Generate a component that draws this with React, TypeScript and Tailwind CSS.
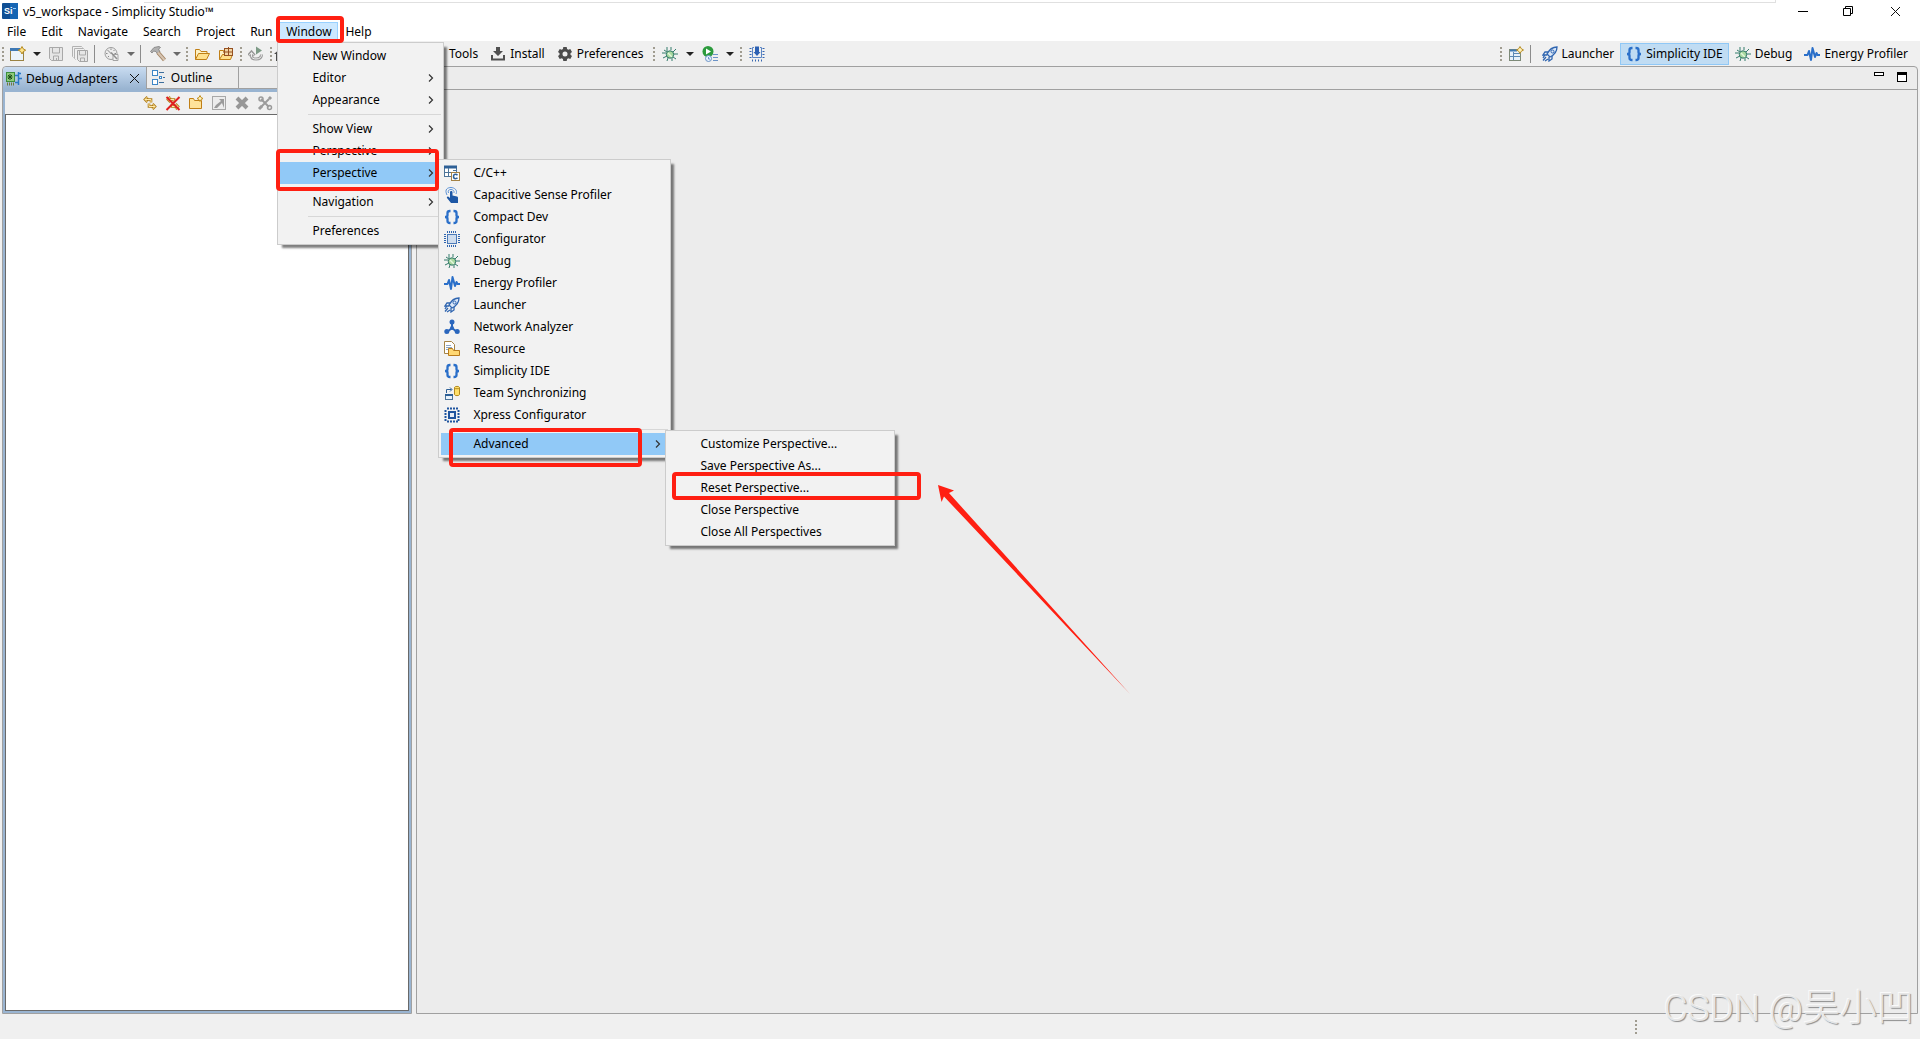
import type { ReactNode } from 'react';

interface MenuEntry {
  label: string;
  icon?: ReactNode;
  arrow?: boolean;
  active?: boolean;
  sub?: ReactNode;
}

type Entry = MenuEntry | 'sep';

function Svg({ children, size = 16 }: { children: ReactNode; size?: number }) {
  return (
    <svg width={size} height={size} viewBox="0 0 16 16" fill="none" className="shrink-0" aria-hidden="true">
      {children}
    </svg>
  );
}

const StudioIcon = () => (
  <svg width="16" height="16" viewBox="0 0 16 16" className="shrink-0" aria-hidden="true">
    <rect width="16" height="16" rx="1" fill="#0f4f94" />
    <rect x="8" width="8" height="16" fill="#1766b4" />
    <text x="2" y="11" fontSize="9" fontWeight="700" fontFamily="Liberation Sans, sans-serif" fill="#fff">
      Si
    </text>
    <rect x="11" y="5" width="3" height="1" fill="#8fd0ff" />
  </svg>
);

const NewIcon = () => (
  <Svg>
    <rect x="0.5" y="3.5" width="13" height="11" fill="#eaf3fb" stroke="#9b8343" />
    <rect x="0" y="2" width="10" height="3" fill="#3f79b5" />
    <path d="M12 0.5l1.3 2.4 2.4 1.3-2.4 1.3L12 8l-1.3-2.5-2.4-1.3 2.4-1.3z" fill="#ffe48a" stroke="#b58a22" />
  </Svg>
);

const SaveIcon = () => (
  <Svg>
    <path d="M1.5 1.5h13v13h-11l-2-2z" stroke="#a9a9a9" fill="#e6e6e6" />
    <path d="M4.5 2v5h7V2M5.5 14v-4h5v4M8.5 12v2" stroke="#a9a9a9" />
  </Svg>
);

const SaveAllIcon = () => (
  <Svg>
    <path d="M1.5 11.5l-1-1v-10h9l1 1M3.5 13.5l-1-1v-10h9l1 1" stroke="#b2b2b2" />
    <path d="M5.5 4.5h10v11h-8l-2-2z" stroke="#a5a5a5" fill="#e6e6e6" />
    <path d="M7.5 5v4h6V5M8.5 15v-3h4v3" stroke="#a9a9a9" />
  </Svg>
);

const GaugeIcon = () => (
  <Svg>
    <circle cx="7" cy="7.5" r="6" stroke="#9c9c9c" fill="#ececec" />
    <path d="M3.5 4l4 4M7 2.5V4M2 7.500h1.500M10.500 7.500H12M4 11l1-1M10.500 4l-1 1" stroke="#8a8a8a" />
    <path d="M9 8.500h5v6H9z" fill="#f1f1f1" stroke="#a3a3a3" />
    <path d="M7 6.500l6 6.500" stroke="#8f8f8f" strokeWidth="1.5" />
  </Svg>
);

const HammerIcon = () => (
  <Svg>
    <path d="M0.5 5.500L4 1.500l5-1 1.500 1L8.500 3l1.500 3-2.500 2-1.500-2.500L3.500 5l-1.500 2z" fill="#b1b1b1" stroke="#8d8d8d" />
    <path d="M8 6.500l6.500 7.500" stroke="#a58767" strokeWidth="4" />
    <path d="M8 6.500l6.500 7.500" stroke="#d6c4b2" strokeWidth="2" />
  </Svg>
);

const FolderIcon = () => (
  <Svg>
    <path d="M1.5 13.500v-10h4l1.500 2h6v2" fill="#fdf1c4" stroke="#c07f16" />
    <path d="M1.5 13.500l3-6h11l-3 6z" fill="#ffe08c" stroke="#c07f16" />
  </Svg>
);

const PackageFolderIcon = () => (
  <Svg>
    <path d="M1.5 13.500v-9h4l1 2h6v2" fill="#fdf1c4" stroke="#c07f16" />
    <path d="M1.5 13.500l3-5h10l-2 5z" fill="#ffe08c" stroke="#c07f16" />
    <rect x="6.5" y="2.5" width="8" height="7" fill="#f3d6a4" stroke="#955021" />
    <path d="M10.5 1v9M5 6h10" stroke="#955021" />
  </Svg>
);

const RunExternalIcon = () => (
  <Svg>
    <path d="M8 0.5l6 4-6 4z" fill="#7d9a86" />
    <path
      d="M3.5 6.500v3.500c0 2 2 3 4.500 3 3.500 0 5.500-1.500 5.500-4.500M0.5 9.500l3-3.500 3 3.500"
      stroke="#9a9a9a"
      strokeWidth="3"
    />
    <path d="M3.5 7v3c0 2 2 3 4.500 3 3.500 0 5.500-1.500 5.500-4.500M1 9.500l2.500-3L6 9.500" stroke="#efefef" />
  </Svg>
);

const HomeIcon = () => (
  <Svg>
    <path d="M0 8l8-7 8 7h-2v7h-4v-5H6v5H2V8z" fill="#4b4b4b" />
  </Svg>
);

const InstallIcon = () => (
  <Svg>
    <path d="M6 1h4v4h3l-5 5-5-5h3z" fill="#505050" />
    <path d="M2 9v4.500h12V9" stroke="#505050" strokeWidth="2" />
  </Svg>
);

const GearIcon = () => (
  <Svg>
    <path
      fillRule="evenodd"
      fill="#4d4d4d"
      d="M6.300 1h3.400l.4 2 1.200.7 2-.8 1.700 3-1.500 1.400v1.400l1.500 1.400-1.700 3-2-.8-1.200.7-.4 2H6.300l-.4-2-1.200-.7-2 .8-1.700-3 1.500-1.400V7.300L1 5.900l1.700-3 2 .8L5.900 3zM8 5.500a2.500 2.500 0 100 5 2.500 2.500 0 000-5z"
    />
  </Svg>
);

const BugIcon = () => (
  <Svg>
    <path
      d="M5 1v4M9 1v3M2 4l3 2M14 3l-3 3M0 7h4M11 8h5M1 12l4-2M14 13l-3-2M6 12l-1 3M10 12v3"
      stroke="#347c6c"
    />
    <circle cx="8" cy="8.5" r="3.7" fill="#a9d9a0" stroke="#2c7466" />
    <path d="M6 7l4 4" stroke="#e4f7dc" strokeWidth="1.5" />
  </Svg>
);

const RunIcon = () => (
  <Svg>
    <circle cx="6" cy="5.5" r="5.5" fill="#2c9b3d" />
    <path d="M4 2.500l5 3-5 3z" fill="#fff" />
    <circle cx="6.5" cy="12.5" r="3" fill="#e8f2fd" stroke="#6b93c7" />
    <path d="M6.5 11v2H8M11 8.500h5M11 11.500h5M11 14.500h5" stroke="#6b93c7" />
  </Svg>
);

const FlashIcon = () => (
  <Svg>
    <path
      d="M0.5 2.500h2M0.5 5.500h2M0.5 8.500h2M0.5 11.500h2M13.500 2.500h2M13.500 5.500h2M13.500 8.500h2M13.500 11.500h2"
      stroke="#3767b0"
    />
    <path d="M3.500 13.500v2M6.500 13.500v2M9.500 13.500v2M12.500 13.500v2" stroke="#3767b0" />
    <path d="M5 1.500H3.500v10h9v-10H11" stroke="#5a85c4" />
    <path d="M6 0.500h4V6h1.500L8 10 4.500 6H6z" fill="#2d61b3" />
  </Svg>
);

const OpenPerspectiveIcon = () => (
  <Svg>
    <rect x="1.5" y="3.5" width="11" height="11" fill="#e7f1fb" stroke="#7d8a78" />
    <path d="M2 4.500h7" stroke="#3f79b5" strokeWidth="2" />
    <path d="M5.5 6v8M2 10.500h10M5.500 7.500h7" stroke="#5b88b5" />
    <path d="M12 0.5l1.300 2.200 2.200 1.300-2.200 1.300L12 7.500l-1.300-2.200L8.500 4l2.200-1.300z" fill="#fff0b8" stroke="#b58a22" />
  </Svg>
);

const RocketIcon = () => (
  <Svg>
    <path d="M15 1C10 1 7 4 5 8l3 3c4-2 7-5 7-10z" fill="#dce8f8" stroke="#2f65b0" strokeWidth="1.3" />
    <circle cx="10.5" cy="5.5" r="1.5" stroke="#2f65b0" />
    <path d="M6 6H3L1 9h4M10 10v3l-3 2v-4M4 11l-3 3.500M6 13l-3 2M2.500 9.500L1 12" stroke="#2f65b0" strokeWidth="1.3" />
  </Svg>
);

const BracesIcon = () => (
  <Svg>
    <path
      d="M6.500 2H6C4.300 2 3.500 2.600 3.500 4v2.300C3.500 7.500 2.700 8 1 8c1.700 0 2.500.5 2.500 1.700V12c0 1.400.8 2 2.500 2h.5M9.500 2h.5c1.700 0 2.500.6 2.500 2v2.300c0 1.200.8 1.700 2.500 1.700-1.700 0-2.500.5-2.500 1.700V12c0 1.400-.8 2-2.500 2h-.5"
      stroke="#2a6fc9"
      strokeWidth="2.3"
    />
  </Svg>
);

const PulseIcon = () => (
  <Svg>
    <path d="M0 9h3.500L5 5l2 9L8.500 2l2.500 9 1.500-4 1 2H16" stroke="#2a6fc9" strokeWidth="2" strokeLinejoin="round" />
  </Svg>
);

const CppIcon = () => (
  <Svg>
    <rect x="0.5" y="1.5" width="12" height="10" fill="#fff" stroke="#4d7499" />
    <path d="M0 2h13" stroke="#2e6096" strokeWidth="3" />
    <path d="M4.500 3v9M1 7.500h8M9 5.500h3" stroke="#4d7499" />
    <rect x="7.5" y="7.5" width="8" height="8" fill="#fff" stroke="#a58345" />
    <path d="M13.500 10.200c-.6-.7-1.200-.9-2-.9-1.300 0-2 .9-2 2.200s.7 2.200 2 2.200c.8 0 1.400-.2 2-.9" stroke="#2e6096" strokeWidth="1.5" />
  </Svg>
);

const TouchIcon = () => (
  <Svg>
    <path d="M3 8C0 2 4 0.500 7 0.500S14 3 12 7M4.500 6C3.500 3.500 5 2.500 7 2.500s3.500 1.500 3 3.500" stroke="#5d93d6" />
    <path d="M6 5c0-1.500 2.500-1.500 2.500 0v3.500L13 9.500c1 .3 1 1 1 2V16H7l-4-5c-.5-1 .5-2 1.500-1.200L6 11z" fill="#1d57a5" />
  </Svg>
);

const ConfiguratorIcon = () => (
  <Svg>
    <path
      d="M3.500 0v2M5.500 0v2M7.500 0v2M9.500 0v2M11.500 0v2M3.500 14v2M5.500 14v2M7.500 14v2M9.500 14v2M11.500 14v2M0 3.500h2M0 5.500h2M0 7.500h2M0 9.500h2M0 11.500h2M14 3.500h2M14 5.500h2M14 7.500h2M14 9.500h2M14 11.500h2"
      stroke="#2f65b0"
    />
    <rect x="3.5" y="3.5" width="9" height="9" fill="#cfddee" stroke="#4a79b8" />
  </Svg>
);

const NetworkIcon = () => (
  <Svg>
    <path d="M8 3v6M8 9l-5 4M8 9l5 4" stroke="#2a66bd" strokeWidth="2" />
    <circle cx="8" cy="3" r="2.5" fill="#2a66bd" />
    <circle cx="2.8" cy="12.5" r="2.5" fill="#2a66bd" />
    <circle cx="13.2" cy="12.5" r="2.5" fill="#2a66bd" />
    <circle cx="8" cy="9" r="2" fill="#2a66bd" />
  </Svg>
);

const ResourceIcon = () => (
  <Svg>
    <path d="M0.5 0.500h7l3 3v9h-10z" fill="#fff" stroke="#a58345" />
    <path d="M2 4.500h5M2 6.500h6M2 8.500h3" stroke="#8ca5c4" />
    <path d="M4.500 14.500v-7h4l1 2h6v5z" fill="#ffd873" stroke="#b97b1b" />
  </Svg>
);

const TeamIcon = () => (
  <Svg>
    <rect x="1.5" y="9.5" width="7" height="5" fill="#eaf3fb" stroke="#4d7499" />
    <path d="M1 10h8" stroke="#2e6096" strokeWidth="2" />
    <path d="M2.500 8V4.500h5M6 2.500l2 2-2 2" stroke="#2e6096" />
    <path d="M10.500 2.500v7c0 1.500 5 1.500 5 0v-7c0-1.500-5-1.500-5 0z" fill="#ffe06a" stroke="#b38a1f" />
    <path d="M10.500 3c0 1 5 1 5 0" stroke="#b38a1f" />
  </Svg>
);

const XpressIcon = () => (
  <Svg>
    <path d="M3 1.500h11M3 14.500h11M1.500 3v11M14.500 3v11" stroke="#1f549f" strokeWidth="2" strokeDasharray="2 1" />
    <rect x="5" y="5" width="6" height="6" fill="#e7eef8" stroke="#1f549f" strokeWidth="2" />
  </Svg>
);

const AdapterIcon = () => (
  <Svg>
    <rect x="0.5" y="1.5" width="8" height="9" fill="#8fca7c" stroke="#3c8f3c" />
    <path d="M2 4l4 4M6 4L2 8M4 3v6M1.500 6h5" stroke="#184c18" />
    <path d="M1 13h8" stroke="#6f7a3a" strokeWidth="3" strokeDasharray="1 1" />
    <path d="M12.500 1v13M9 4.500h3M13 7.500h3M9 11.500h3M13 2.500h2" stroke="#2878c8" strokeWidth="1.5" />
  </Svg>
);

const OutlineIcon = () => (
  <Svg>
    <rect x="1.5" y="0.5" width="5" height="5" fill="#fff" stroke="#3d86c6" />
    <rect x="1.5" y="9.5" width="5" height="5" fill="#fff" stroke="#3d86c6" />
    <rect x="8.5" y="6.5" width="2" height="2" fill="#fff" stroke="#3d86c6" />
    <path d="M8 2.500h5M12 7.500h2M8 12.500h5" stroke="#3d6e9c" />
  </Svg>
);

const linkPath = 'M9 7.500V4.500H3M5.500 2L3 4.500 5.500 7M7 8.500v3h6M10.500 9l2.500 2.500-2.500 2.500';

const LinkIcon = ({ broken = false }: { broken?: boolean }) => (
  <Svg>
    <path d={linkPath} stroke="#b07d18" strokeWidth="2.6" />
    <path d={linkPath} stroke="#ffe9a8" />
    {broken && <path d="M1.500 2l13 13M14.500 2l-13 13" stroke="#e02020" strokeWidth="2" />}
  </Svg>
);

const NewFolderIcon = () => (
  <Svg>
    <path d="M1.500 13.500v-10h4l1 2h7v8z" fill="#ffe39a" stroke="#c07f16" />
    <path d="M12 0.500l1 2 2 1-2 1-1 2-1-2-2-1 2-1z" fill="#fff4c4" stroke="#c2901f" />
  </Svg>
);

const EditIcon = () => (
  <Svg>
    <rect x="1.5" y="1.5" width="13" height="13" fill="#ececec" stroke="#a8a8a8" />
    <path d="M8 4h5v9l-2-5-5 5H3l2-3 5-4z" fill="#9a9a9a" />
  </Svg>
);

const DeleteIcon = () => (
  <Svg>
    <path d="M3 3l10 10M13 3L3 13" stroke="#979797" strokeWidth="4" />
  </Svg>
);

const ToolsIcon = () => (
  <Svg>
    <path d="M4 4l8 8M12 4l-8 8" stroke="#9b9b9b" strokeWidth="2" />
    <circle cx="4" cy="4" r="2" stroke="#9b9b9b" strokeWidth="1.5" />
    <circle cx="12.5" cy="12.5" r="2" stroke="#9b9b9b" strokeWidth="1.5" />
    <path d="M12 4l2-2M2 14l3-3" stroke="#9b9b9b" strokeWidth="3" />
  </Svg>
);

const CloseIcon = () => (
  <svg width="11" height="11" viewBox="0 0 11 11" fill="none" aria-hidden="true">
    <path d="M1 1l9 9M10 1l-9 9" stroke="#111" />
  </svg>
);

const Grip = () => (
  <span className="flex h-4 w-[6px] shrink-0 flex-col items-center justify-between py-px">
    {[0, 1, 2, 3].map((n) => (
      <span key={n} className="size-[2px] bg-[#a09c90]" />
    ))}
  </span>
);

const Divider = () => <span className="mr-[5px] ml-[2px] h-[18px] w-px shrink-0 bg-[#8c8c8c]" />;

function IconButton({ label, children }: { label: string; children: ReactNode }) {
  return (
    <button type="button" aria-label={label} className="flex h-6 shrink-0 items-center px-1">
      {children}
    </button>
  );
}

function Caret({ label, dim = false }: { label: string; dim?: boolean }) {
  return (
    <button type="button" aria-label={label} className="flex h-6 w-[14px] shrink-0 items-center justify-center">
      <svg width="8" height="4" viewBox="0 0 8 4" aria-hidden="true">
        <path d="M0 0h8L4 4z" fill={dim ? '#6a6a6a' : '#222'} />
      </svg>
    </button>
  );
}

function TextButton({ icon, label, active = false }: { icon?: ReactNode; label: string; active?: boolean }) {
  return (
    <button
      type="button"
      className={`flex h-[22px] shrink-0 items-center gap-1 border px-[5px] whitespace-nowrap ${
        active ? 'border-[#90c8f6] bg-[#c0dcf3]' : 'border-transparent'
      }`}
    >
      {icon}
      {label}
    </button>
  );
}

function Menu({ items, className }: { items: Entry[]; className: string }) {
  return (
    <div
      role="menu"
      className={`absolute border border-[#cccccc] bg-[#f2f2f2] p-[2px] shadow-[4px_4px_2px_-1px_rgba(0,0,0,0.5)] ${className}`}
    >
      {items.map((item, index) =>
        item === 'sep' ? (
          <div key={index} className="ml-7 flex h-[7px] items-center">
            <div className="h-px w-full bg-[#d7d7d7]" />
          </div>
        ) : (
          <div key={index} className="relative">
            <button
              type="button"
              role="menuitem"
              className={`flex h-[22px] w-full items-center text-left whitespace-nowrap ${
                item.active ? 'bg-[#91c9f7]' : ''
              }`}
            >
              <span className="flex w-8 shrink-0 pl-[3px]">{item.icon}</span>
              <span className="flex-1">{item.label}</span>
              {item.arrow && (
                <svg width="6" height="8" viewBox="0 0 6 8" fill="none" className="mr-[7px]" aria-hidden="true">
                  <path d="M1 0.5L4.500 4 1 7.500" stroke="#333" strokeWidth="1.2" />
                </svg>
              )}
            </button>
            {item.sub}
          </div>
        ),
      )}
    </div>
  );
}

const advancedItems: Entry[] = [
  { label: 'Customize Perspective...' },
  { label: 'Save Perspective As...' },
  { label: 'Reset Perspective...' },
  { label: 'Close Perspective' },
  { label: 'Close All Perspectives' },
];

const perspectiveItems: Entry[] = [
  { label: 'C/C++', icon: <CppIcon /> },
  { label: 'Capacitive Sense Profiler', icon: <TouchIcon /> },
  { label: 'Compact Dev', icon: <BracesIcon /> },
  { label: 'Configurator', icon: <ConfiguratorIcon /> },
  { label: 'Debug', icon: <BugIcon /> },
  { label: 'Energy Profiler', icon: <PulseIcon /> },
  { label: 'Launcher', icon: <RocketIcon /> },
  { label: 'Network Analyzer', icon: <NetworkIcon /> },
  { label: 'Resource', icon: <ResourceIcon /> },
  { label: 'Simplicity IDE', icon: <BracesIcon /> },
  { label: 'Team Synchronizing', icon: <TeamIcon /> },
  { label: 'Xpress Configurator', icon: <XpressIcon /> },
  'sep',
  {
    label: 'Advanced',
    arrow: true,
    active: true,
    sub: <Menu items={advancedItems} className="-top-[3px] left-[224px] w-[230px]" />,
  },
];

const windowItems: Entry[] = [
  { label: 'New Window' },
  { label: 'Editor', arrow: true },
  { label: 'Appearance', arrow: true },
  'sep',
  { label: 'Show View', arrow: true },
  { label: 'Perspective', arrow: true },
  {
    label: 'Perspective',
    arrow: true,
    active: true,
    sub: <Menu items={perspectiveItems} className="-top-[3px] left-[158px] w-[233px]" />,
  },
  'sep',
  { label: 'Navigation', arrow: true },
  'sep',
  { label: 'Preferences' },
];

function TitleBar() {
  return (
    <header className="relative flex h-[22px] items-center bg-white pl-[2px]">
      <div className="absolute top-0 right-[144px] left-[144px] h-[3px] border-r border-b border-[#e0e0e0]" />
      <StudioIcon />
      <h1 className="ml-[5px] flex-1 pt-px">v5_workspace - Simplicity Studio™</h1>
      <div className="flex h-full items-center">
        <button type="button" aria-label="Minimize" className="flex h-full w-[45px] items-center justify-center">
          <span className="h-px w-[10px] bg-black" />
        </button>
        <button type="button" aria-label="Restore" className="flex h-full w-[45px] items-center justify-center">
          <svg width="10" height="10" viewBox="0 0 10 10" fill="none" stroke="#000" aria-hidden="true">
            <path d="M0.5 2.500h7v7h-7zM2.500 2V0.500h7v7H8" />
          </svg>
        </button>
        <button type="button" aria-label="Close" className="flex h-full w-[50px] items-center justify-center">
          <CloseIcon />
        </button>
      </div>
    </header>
  );
}

function MenuBar() {
  return (
    <nav className="flex h-[19px] bg-white">
      <div className="flex gap-px">
        {['File', 'Edit', 'Navigate', 'Search', 'Project', 'Run'].map((name) => (
          <button key={name} type="button" className="px-[7px] pt-px">
            {name}
          </button>
        ))}
      </div>
      <div className="relative z-10 flex">
        <button type="button" className="w-[59px] border border-[#99d1ff] bg-[#cce8ff]">
          Window
        </button>
        <Menu items={windowItems} className="top-5 -left-[2px] w-[167px]" />
      </div>
      <button type="button" className="px-[7px] pt-px">
        Help
      </button>
    </nav>
  );
}

function ToolBar() {
  return (
    <div className="flex h-[25px] items-center bg-[#f0f0f0] pt-px">
      <Grip />
      <IconButton label="New"><NewIcon /></IconButton>
      <Caret label="New options" />
      <IconButton label="Save"><SaveIcon /></IconButton>
      <IconButton label="Save all"><SaveAllIcon /></IconButton>
      <Divider />
      <IconButton label="Profile"><GaugeIcon /></IconButton>
      <Caret label="Profile options" dim />
      <Divider />
      <IconButton label="Build"><HammerIcon /></IconButton>
      <Caret label="Build options" dim />
      <Grip />
      <IconButton label="Open"><FolderIcon /></IconButton>
      <IconButton label="Open package"><PackageFolderIcon /></IconButton>
      <Grip />
      <IconButton label="Run last"><RunExternalIcon /></IconButton>
      <Grip />
      <button type="button" aria-label="Home" className="w-[169px] shrink-0">
        <HomeIcon />
      </button>
      <TextButton label="Tools" />
      <TextButton icon={<InstallIcon />} label="Install" />
      <TextButton icon={<GearIcon />} label="Preferences" />
      <div className="ml-px flex items-center gap-px">
        <Grip />
        <IconButton label="Debug"><BugIcon /></IconButton>
        <Caret label="Debug options" />
        <IconButton label="Run"><RunIcon /></IconButton>
        <Caret label="Run options" />
        <Grip />
        <IconButton label="Flash"><FlashIcon /></IconButton>
      </div>
      <div className="ml-auto flex items-center pr-1.5">
        <Grip />
        <IconButton label="Open perspective"><OpenPerspectiveIcon /></IconButton>
        <Divider />
        <TextButton icon={<RocketIcon />} label="Launcher" />
        <TextButton icon={<BracesIcon />} label="Simplicity IDE" active />
        <TextButton icon={<BugIcon />} label="Debug" />
        <TextButton icon={<PulseIcon />} label="Energy Profiler" />
      </div>
    </div>
  );
}

function DebugAdapters() {
  return (
    <aside className="flex w-[410px] shrink-0 flex-col rounded-t border border-[#a0a0a0] bg-[#ececec]">
      <div className="flex h-[22px] shrink-0">
        <div className="flex items-center rounded-tl bg-gradient-to-b from-[#c9dcf1] to-[#99b4d1] pt-px pr-1.5 pl-[3px]">
          <AdapterIcon />
          <button type="button" className="ml-1">Debug Adapters</button>
          <button type="button" aria-label="Close Debug Adapters" className="ml-[11px]">
            <CloseIcon />
          </button>
        </div>
        <button
          type="button"
          className="flex items-center gap-1 border-x border-b border-[#a0a0a0] pt-px pr-[26px] pl-1"
        >
          <OutlineIcon />
          Outline
        </button>
        <div className="flex-1 border-b border-[#a0a0a0]" />
      </div>
      <div className="flex flex-1 flex-col bg-[#99b4d1] p-[2px] pt-[3px]">
        <div className="flex h-[22px] shrink-0 items-center gap-[7px] bg-[#f0f0f0] pl-[137px]">
          <button type="button" aria-label="Link"><LinkIcon /></button>
          <button type="button" aria-label="Unlink"><LinkIcon broken /></button>
          <button type="button" aria-label="New folder"><NewFolderIcon /></button>
          <button type="button" aria-label="Edit"><EditIcon /></button>
          <button type="button" aria-label="Delete"><DeleteIcon /></button>
          <button type="button" aria-label="Configure"><ToolsIcon /></button>
        </div>
        <div className="flex-1 border border-[#696969] bg-white" />
      </div>
    </aside>
  );
}

function EditorArea() {
  return (
    <main className="flex-1 rounded-t border border-[#a0a0a0] bg-[#ececec]">
      <div className="flex h-[23px] items-start justify-end gap-[13px] border-b border-[#a0a0a0] pt-[5px] pr-[10px]">
        <button type="button" aria-label="Minimize view" className="h-1 w-[10px] border border-black bg-white" />
        <button type="button" aria-label="Maximize view" className="h-[10px] w-[10px] border border-t-[3px] border-black bg-white" />
      </div>
    </main>
  );
}

// Red marks that walk the reader through Window > Perspective > Advanced > Reset
function Annotations() {
  return (
    <div className="pointer-events-none absolute inset-0 z-20">
      <div className="absolute top-4 left-[276px] h-[27px] w-[68px] rounded border-4 border-[#ff1f12]" />
      <div className="absolute top-[149px] left-[276px] h-[42px] w-[163px] rounded border-4 border-[#ff1f12]" />
      <div className="absolute top-[428px] left-[449px] h-[39px] w-[193px] rounded border-4 border-[#ff1f12]" />
      <div className="absolute top-[472px] left-[672px] h-[28px] w-[249px] rounded border-4 border-[#ff1f12]" />
      <svg className="absolute top-[484px] left-[937px]" width="194" height="212" viewBox="0 0 194 212" aria-hidden="true">
        <path d="M1 1l16 5.500-5 2.500L193 210 7 12.500 4.500 18z" fill="#ff1f12" />
      </svg>
    </div>
  );
}

function App() {
  return (
    <div className="relative flex h-screen flex-col overflow-hidden bg-[#f0f0f0] font-['Noto_Sans','Noto_Sans_CJK_SC',sans-serif] text-[12px] leading-4 text-black">
      <TitleBar />
      <MenuBar />
      <ToolBar />
      <div className="flex flex-1 gap-1 pr-[2px] pl-[2px]">
        <DebugAdapters />
        <EditorArea />
      </div>
      <footer className="flex h-[25px] shrink-0 items-center justify-end pr-[281px]">
        <Grip />
      </footer>
      <Annotations />
      <div className="absolute right-1.5 bottom-2 z-20 font-[Roboto,'Noto_Sans_CJK_SC',sans-serif] text-[37px] leading-[44px] font-light whitespace-nowrap text-[#e6e6e6] [text-shadow:-1px_-1px_0_#fafafa,1px_1px_1px_#8c8c8c]">
        CSDN @吴小凹
      </div>
    </div>
  );
}

export default App;
